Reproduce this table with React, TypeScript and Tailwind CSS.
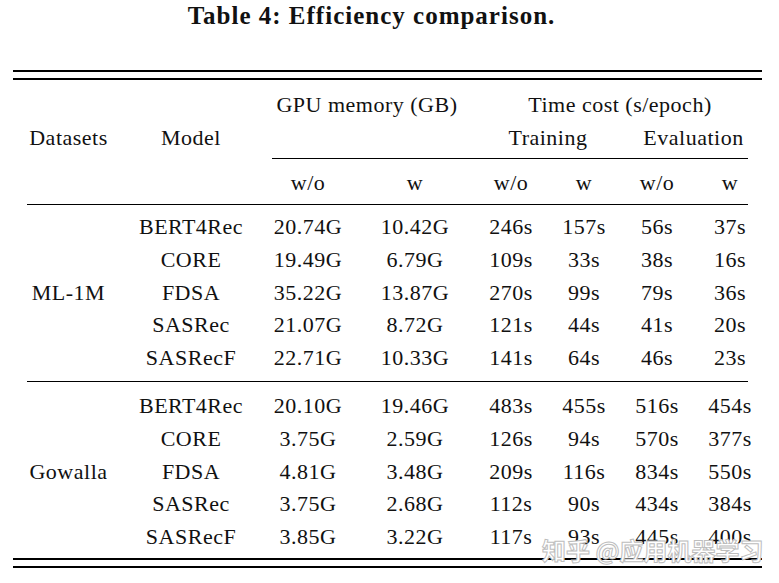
const C = [
  'ml-[28px] w-[81px]',
  'ml-[32px] w-[100px]',
  'ml-[32px] w-[70px]',
  'ml-[37px] w-[70px]',
  'ml-[36px] w-[50px]',
  'ml-[23px] w-[50px]',
  'ml-[23px] w-[50px]',
  'ml-[30px] w-[36px]',
]

const cell = 'shrink-0 flex justify-center whitespace-nowrap'

const groups = [
  {
    name: 'ML-1M',
    rows: [
      ['BERT4Rec', '20.74G', '10.42G', '246s', '157s', '56s', '37s'],
      ['CORE', '19.49G', '6.79G', '109s', '33s', '38s', '16s'],
      ['FDSA', '35.22G', '13.87G', '270s', '99s', '79s', '36s'],
      ['SASRec', '21.07G', '8.72G', '121s', '44s', '41s', '20s'],
      ['SASRecF', '22.71G', '10.33G', '141s', '64s', '46s', '23s'],
    ],
  },
  {
    name: 'Gowalla',
    rows: [
      ['BERT4Rec', '20.10G', '19.46G', '483s', '455s', '516s', '454s'],
      ['CORE', '3.75G', '2.59G', '126s', '94s', '570s', '377s'],
      ['FDSA', '4.81G', '3.48G', '209s', '116s', '834s', '550s'],
      ['SASRec', '3.75G', '2.68G', '112s', '90s', '434s', '384s'],
      ['SASRecF', '3.85G', '3.22G', '117s', '93s', '445s', '400s'],
    ],
  },
]

function Group({ name, rows }: { name: string; rows: string[][] }) {
  return (
    <div className="flex">
      <div className={`${cell} ${C[0]} items-center`}>{name}</div>
      <div className="flex flex-col">
        {rows.map((r) => (
          <div key={r[0]} className="flex h-[32.8px] items-center leading-[32.8px]">
            {r.map((v, i) => (
              <div key={i} className={`${cell} ${C[i + 1]}`}>
                {v}
              </div>
            ))}
          </div>
        ))}
      </div>
    </div>
  )
}

export default function App() {
  return (
    <div className="relative h-[583px] w-[779px] overflow-hidden bg-white text-[22px] tracking-[0.5px] text-[#111] [font-family:'Liberation_Serif','Times_New_Roman',serif]">
      <div className="h-[31px] w-[743px] text-center text-[25px] font-bold leading-[31px] tracking-[1px]">
        Table 4: Efficiency comparison.
      </div>

      <div className="ml-[13px] mt-[39px] h-[2px] w-[749px] bg-black" />
      <div className="ml-[13px] mt-[6px] h-[2px] w-[749px] bg-black" />

      {/* header */}
      <div className="mt-[8px] flex h-[33px] items-center leading-[33px]">
        <div className={`${cell} ml-[274px] w-[186px]`}>GPU memory (GB)</div>
        <div className={`${cell} ml-[64px] w-[192px]`}>Time cost (s/epoch)</div>
      </div>
      <div className="flex h-[33px] items-center leading-[33px]">
        <div className={`${cell} ${C[0]}`}>Datasets</div>
        <div className={`${cell} ${C[1]}`}>Model</div>
        <div className={`${cell} ml-[265px] w-[84px]`}>Training</div>
        <div className={`${cell} ml-[51px] w-[105px]`}>Evaluation</div>
      </div>
      <div className="ml-[272px] mt-[4px] h-px w-[476px] bg-black" />
      <div className="mt-[7px] flex h-[33px] items-center leading-[33px]">
        <div className={`${cell} ml-[273px] w-[70px]`}>w/o</div>
        {['w', 'w/o', 'w', 'w/o', 'w'].map((v, i) => (
          <div key={i} className={`${cell} ${C[i + 3]}`}>
            {v}
          </div>
        ))}
      </div>
      <div className="ml-[27px] mt-[5px] h-px w-[721px] bg-black" />

      <div className="mt-[6px]">
        <Group {...groups[0]} />
      </div>
      <div className="ml-[27px] mt-[6px] h-px w-[721px] bg-black" />
      <div className="mt-[8px]">
        <Group {...groups[1]} />
      </div>

      <div className="ml-[13px] mt-[4px] h-[2px] w-[749px] bg-black" />
      <div className="ml-[13px] mt-[6px] h-[2px] w-[749px] bg-black" />

      {/* watermark */}
      <div className="absolute left-[542px] top-[538px] whitespace-nowrap text-[24px] font-bold leading-none tracking-normal text-white [-webkit-text-stroke:1px_#bdbdbd] [font-family:'Noto_Sans_CJK_SC','Noto_Sans',sans-serif]">
        知乎 @应用机器学习
      </div>
    </div>
  )
}
